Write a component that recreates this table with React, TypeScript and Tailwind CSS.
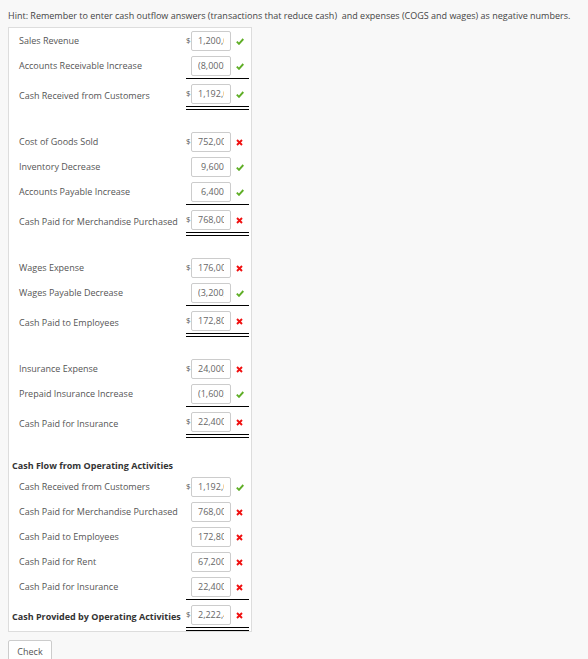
import React from 'react';

type Row = {
  label: string;
  value: string;
  dollar?: boolean;
  ok: boolean;
  line?: 'single' | 'double';
  bold?: boolean;
};

const groups: Row[][] = [
  [
    { label: 'Sales Revenue', value: '1,200,000', dollar: true, ok: true },
    { label: 'Accounts Receivable Increase', value: '(8,000)', ok: true, line: 'single' },
    { label: 'Cash Received from Customers', value: '1,192,000', dollar: true, ok: true, line: 'double' },
  ],
  [
    { label: 'Cost of Goods Sold', value: '752,000', dollar: true, ok: false },
    { label: 'Inventory Decrease', value: '9,600', ok: true },
    { label: 'Accounts Payable Increase', value: '6,400', ok: true, line: 'single' },
    { label: 'Cash Paid for Merchandise Purchased', value: '768,000', dollar: true, ok: false, line: 'double' },
  ],
  [
    { label: 'Wages Expense', value: '176,000', dollar: true, ok: false },
    { label: 'Wages Payable Decrease', value: '(3,200)', ok: true, line: 'single' },
    { label: 'Cash Paid to Employees', value: '172,800', dollar: true, ok: false, line: 'double' },
  ],
  [
    { label: 'Insurance Expense', value: '24,000', dollar: true, ok: false },
    { label: 'Prepaid Insurance Increase', value: '(1,600)', ok: true, line: 'single' },
    { label: 'Cash Paid for Insurance', value: '22,400', dollar: true, ok: false, line: 'double' },
  ],
];

const summary: Row[] = [
  { label: 'Cash Received from Customers', value: '1,192,000', dollar: true, ok: true },
  { label: 'Cash Paid for Merchandise Purchased', value: '768,000', ok: false },
  { label: 'Cash Paid to Employees', value: '172,800', ok: false },
  { label: 'Cash Paid for Rent', value: '67,200', ok: false },
  { label: 'Cash Paid for Insurance', value: '22,400', ok: false, line: 'single' },
  { label: 'Cash Provided by Operating Activities', value: '2,222,400', dollar: true, ok: false, bold: true, line: 'double' },
];

const Check = () => (
  <svg width="8" height="7" viewBox="0 0 8 7" className="mt-[2px]">
    <path d="M0.8 3.6 L3 5.8 L7.3 1" fill="none" stroke="#5fae26" strokeWidth="1.9" />
  </svg>
);

const Cross = () => (
  <svg width="7" height="7" viewBox="0 0 7 7" className="mt-[2px]">
    <path d="M1 1 L6 6 M6 1 L1 6" fill="none" stroke="#f01010" strokeWidth="1.9" />
  </svg>
);

const Line = ({ kind }: { kind: 'single' | 'double' }) =>
  kind === 'single' ? (
    <div className="ml-auto mr-[2px] mb-[2px] h-px w-[63px] bg-black" />
  ) : (
    <div className="ml-auto mr-[2px] h-[4px] w-[63px] border-y border-black" />
  );

const RowView = ({ r }: { r: Row }) => {
  const labelCls = [
    'flex-1',
    r.bold ? 'pl-[3px] font-bold text-[#333]' : 'pl-[10px] text-[#555]',
    r.line === 'double' ? 'mt-[5px]' : '',
  ].join(' ');
  return (
    <>
      <div className="flex h-[25px] items-center">
        <div className={labelCls}>{r.label}</div>
        <div className="-mt-[2px] w-[6px] pl-px text-[8px] text-[#555]">{r.dollar ? '$' : ''}</div>
        <input
          readOnly
          value={r.value}
          className="h-[20px] w-[40px] rounded-[2px] border border-[#ccc] bg-white px-[6px] text-right text-[9px] text-[#666] outline-none"
          style={{ fontFamily: '"Open Sans", sans-serif' }}
        />
        <div className="flex w-[20px] pl-[5px]">{r.ok ? <Check /> : <Cross />}</div>
      </div>
      {r.line && <Line kind={r.line} />}
    </>
  );
};

export default function App() {
  return (
    <div
      className="min-h-[659px] bg-[#f8f8f8] px-[8px] pt-[10px] text-[9px] leading-[12px]"
      style={{ fontFamily: '"Open Sans", sans-serif' }}
    >
      <div className="mb-[5px] whitespace-nowrap text-[#444]">
        Hint: Remember to enter cash outflow answers (transactions that reduce cash)&nbsp; and expenses (COGS and wages) as negative numbers.
      </div>

      <div className="w-[244px] border border-[#ddd] bg-white">
        {groups.map((g, i) => (
          <div key={i} className={i > 0 ? 'mt-[19px]' : ''}>
            {g.map((r) => (
              <RowView key={r.label} r={r} />
            ))}
          </div>
        ))}

        <div className="mt-[19px] flex h-[17px] items-center pl-[3px] font-bold text-[#333]">
          Cash Flow from Operating Activities
        </div>
        {summary.map((r) => (
          <RowView key={r.label} r={r} />
        ))}
      </div>

      <button className="mt-[8px] h-[24px] w-[44px] rounded-[2px] border border-[#ccc] bg-white text-[9px] text-[#555]">
        Check
      </button>
    </div>
  );
}
